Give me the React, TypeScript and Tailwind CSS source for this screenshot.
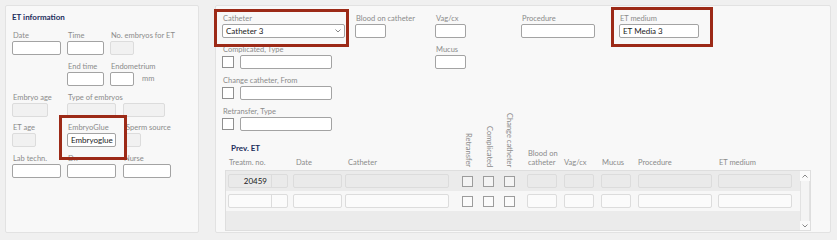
import React from "react";

function Label({ children, className = "" }: { children?: React.ReactNode; className?: string }) {
  return (
    <div className={"h-[10px] leading-[10px] text-[7.5px] text-[#8b8b8b] pl-[1px] whitespace-nowrap " + className}>
      {children}
    </div>
  );
}

function Box({ value, disabled, className = "" }: { value?: string; disabled?: boolean; className?: string }) {
  return (
    <div
      className={
        "h-[14px] rounded-[2px] border text-[8px] leading-[12px] pl-[3px] text-[#1a1a1a] whitespace-nowrap overflow-hidden " +
        (disabled ? "border-[#dcdcdc] bg-[#f1f1f1] " : "border-[#a3a3a3] bg-white ") +
        className
      }
    >
      {value}
    </div>
  );
}

function Field({
  label,
  w,
  className = "",
  disabled,
  value,
}: {
  label?: string;
  w: string;
  className?: string;
  disabled?: boolean;
  value?: string;
}) {
  return (
    <div className={"flex flex-col shrink-0 " + w + " " + className}>
      <Label>{label}</Label>
      <Box value={value} disabled={disabled} className="w-full" />
    </div>
  );
}

function Check({ className = "" }: { className?: string }) {
  return <div className={"w-[12px] h-[12px] border border-[#8f8f8f] bg-white shrink-0 " + className} />;
}

function CheckRow({ label }: { label: string }) {
  return (
    <div className="mt-[7px]">
      <Label>{label}</Label>
      <div className="flex items-center h-[14px]">
        <Check />
        <Box className="w-[92px] ml-[6px]" />
      </div>
    </div>
  );
}

function Chevron({ up }: { up?: boolean }) {
  return (
    <svg width="6" height="4" viewBox="0 0 6 4">
      <polyline
        points={up ? "0.5,3.5 3,1 5.5,3.5" : "0.5,0.5 3,3 5.5,0.5"}
        fill="none"
        stroke="#7a7a7a"
        strokeWidth="0.9"
      />
    </svg>
  );
}

function GridRow({ first }: { first?: boolean }) {
  const cell = first
    ? "h-[14px] rounded-[2px] border border-[#dcdcdc] bg-[#eaeaea] shrink-0 "
    : "h-[14px] rounded-[2px] border border-[#dcdcdc] bg-[#fbfbfb] shrink-0 ";
  const cb = first
    ? "w-[11px] h-[11px] border border-[#9c9c9c] bg-[#f4f4f4] shrink-0 "
    : "w-[11px] h-[11px] border border-[#9c9c9c] bg-[#fbfbfb] shrink-0 ";
  return (
    <div className={"h-[20px] flex items-center " + (first ? "bg-[#ebebeb]" : "bg-[#f7f7f7]")}>
      <div className={cell + "ml-[2px] w-[60px] flex"}>
        <div className="flex-1 text-right pr-[4px] text-[8px] leading-[12px] text-[#1a1a1a]">
          {first ? "20459" : ""}
        </div>
        <div className="w-[16px] h-full border-l border-[#dcdcdc] shrink-0" />
      </div>
      <div className={cell + "ml-[5px] w-[49px]"} />
      <div className={cell + "ml-[3px] w-[104px]"} />
      <div className={cb + "ml-[13px]"} />
      <div className={cb + "ml-[10px]"} />
      <div className={cb + "ml-[10px]"} />
      <div className={cell + "ml-[12px] w-[30px]"} />
      <div className={cell + "ml-[7px] w-[30px]"} />
      <div className={cell + "ml-[7px] w-[30px]"} />
      <div className={cell + "ml-[7px] w-[74px]"} />
      <div className={cell + "ml-[6px] w-[74px]"} />
    </div>
  );
}

function VLabel({ children, className = "" }: { children: React.ReactNode; className?: string }) {
  return (
    <div className={"w-[11px] shrink-0 flex justify-center " + className}>
      <div className="[writing-mode:vertical-rl] text-[7.5px] leading-[9px] text-[#8b8b8b] whitespace-nowrap">
        {children}
      </div>
    </div>
  );
}

export default function App() {
  return (
    <div className="relative w-[837px] h-[240px] bg-[#f0f0f0] flex items-start pt-[5px] pl-[5px] font-[Lato,'Liberation_Sans',sans-serif] overflow-hidden">
      {/* Left panel */}
      <div className="w-[194px] h-[228px] border border-[#e2e2e2] bg-[#f8f8f8] rounded-[2px] pt-[6px] pl-[6px] shrink-0">
        <div className="h-[10px] leading-[10px] text-[8px] font-bold text-[#1c2d5c]">ET information</div>
        <div className="mt-[9px] flex">
          <Field label="Date" w="w-[49px]" />
          <Field label="Time" w="w-[37px]" className="ml-[6px]" />
          <Field label="No. embryos for ET" w="w-[24px]" className="ml-[6px]" disabled />
        </div>
        <div className="mt-[7px] flex">
          <Field label="End time" w="w-[37px]" className="ml-[55px]" />
          <Field label="Endometrium" w="w-[24px]" className="ml-[6px]" />
          <div className="self-end h-[14px] leading-[14px] ml-[8px] text-[7.5px] text-[#8b8b8b]">mm</div>
        </div>
        <div className="mt-[7px] flex">
          <Field label="Embryo age" w="w-[36px]" disabled />
          <Field label="Type of embryos" w="w-[49px]" className="ml-[19px]" disabled />
          <Field label="" w="w-[42px]" className="ml-[7px]" disabled />
        </div>
        <div className="mt-[6px] flex">
          <Field label="ET age" w="w-[24px]" disabled />
          <Field label="EmbryoGlue" w="w-[49px]" className="ml-[31px]" value="Embryoglue" />
          <Field label="Sperm source" w="w-[16px]" className="ml-[9px]" disabled />
        </div>
        <div className="mt-[7px] flex">
          <Field label="Lab techn." w="w-[49px]" />
          <Field label="Dr." w="w-[49px]" className="ml-[6px]" />
          <Field label="Nurse" w="w-[48px]" className="ml-[7px]" />
        </div>
      </div>

      {/* Right panel */}
      <div className="ml-[16px] w-[616px] h-[228px] border border-[#e2e2e2] bg-[#f8f8f8] rounded-[2px] pt-[8px] pl-[6px] shrink-0">
        <div className="flex items-start">
          <div className="w-[123px] shrink-0">
            <Label>Catheter</Label>
            <div className="h-[14px] rounded-[2px] border border-[#a3a3a3] bg-white flex items-center justify-between pl-[3px] pr-[3px]">
              <span className="text-[8px] leading-[12px] text-[#1a1a1a]">Catheter 3</span>
              <Chevron />
            </div>
            <CheckRow label="Complicated, Type" />
            <CheckRow label="Change catheter, From" />
            <CheckRow label="Retransfer, Type" />
          </div>
          <Field label="Blood on catheter" w="w-[31px]" className="ml-[10px]" />
          <div className="ml-[49px] w-[31px] shrink-0">
            <Field label="Vag/cx" w="w-[31px]" />
            <Field label="Mucus" w="w-[31px]" className="mt-[7px]" />
          </div>
          <Field label="Procedure" w="w-[74px]" className="ml-[55px]" />
          <Field label="ET medium" w="w-[80px]" className="ml-[24px]" value="ET Media 3" />
        </div>

        <div className="mt-[12px] pl-[9px] h-[10px] leading-[10px] text-[8px] font-bold text-[#1c2d5c]">Prev. ET</div>

        <div className="ml-[4px] h-[17px] flex items-end pb-[3px] text-[7.5px] leading-[9px] text-[#8b8b8b]">
          <div className="ml-[2px] w-[60px] shrink-0 pl-[1px] whitespace-nowrap">Treatm. no.</div>
          <div className="ml-[5px] w-[49px] shrink-0 pl-[3px]">Date</div>
          <div className="ml-[3px] w-[104px] shrink-0 pl-[3px]">Catheter</div>
          <VLabel className="ml-[13px] pl-[2px]">Retransfer</VLabel>
          <VLabel className="ml-[10px] pl-[2px]">Complicated</VLabel>
          <VLabel className="ml-[10px]">Change catheter</VLabel>
          <div className="ml-[12px] w-[30px] shrink-0 pl-[1px] whitespace-nowrap">
            Blood on
            <br />
            catheter
          </div>
          <div className="ml-[7px] w-[30px] shrink-0">Vag/cx</div>
          <div className="ml-[7px] w-[30px] shrink-0 pl-[1px]">Mucus</div>
          <div className="ml-[7px] w-[74px] shrink-0">Procedure</div>
          <div className="ml-[6px] w-[74px] shrink-0 pl-[1px]">ET medium</div>
        </div>

        <div className="ml-[3px] w-[586px] h-[61px] border border-[#dedede] bg-[#ebebeb] flex">
          <div className="flex-1 flex flex-col">
            <GridRow first />
            <GridRow />
          </div>
          <div className="w-[10px] flex flex-col bg-[#f2f2f2]">
            <div className="h-[10px] bg-[#fafafa] flex items-center justify-center">
              <Chevron up />
            </div>
            <div className="flex-1 border-x border-[#e2e2e2] bg-[#f4f4f4]" />
            <div className="h-[9px] bg-[#fafafa] flex items-center justify-center">
              <Chevron />
            </div>
          </div>
        </div>
      </div>

      {/* Annotation boxes */}
      <div className="absolute left-[59px] top-[115px] w-[68px] h-[45px] border-[3px] border-[#9c2a17]" />
      <div className="absolute left-[214px] top-[9px] w-[135px] h-[38px] border-[3px] border-[#9c2a17]" />
      <div className="absolute left-[611px] top-[7px] w-[102px] h-[40px] border-[3px] border-[#9c2a17]" />
    </div>
  );
}
